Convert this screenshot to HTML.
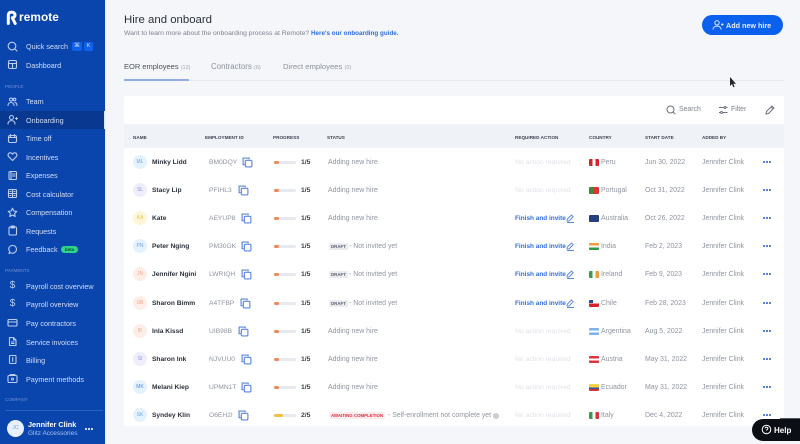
<!DOCTYPE html>
<html lang="en"><head><meta charset="utf-8"><title>Hire and onboard</title>
<style>
*{box-sizing:border-box}
html,body{margin:0;padding:0}
body{width:800px;height:444px;overflow:hidden;background:#f4f6fa;font-family:"Liberation Sans",sans-serif;position:relative;color:#8a8f9a}
#w{position:absolute;inset:0;filter:blur(.35px)}
.a{position:absolute;white-space:nowrap}
#side{position:absolute;left:0;top:0;width:105px;height:444px;background:#0a45ae}
.n{position:absolute;left:26px;font-size:7.2px;line-height:10px;color:#d3def5;white-space:nowrap;transform:translateY(.8px)}
.sec{position:absolute;left:5px;font-size:4.6px;line-height:6px;color:#6f94d6;white-space:nowrap}
.ic{position:absolute;left:7px;width:11px;height:11px;fill:none;stroke:#bccdf0;stroke-width:1.1;stroke-linecap:round;stroke-linejoin:round}
.th{position:absolute;top:135px;font-size:4.65px;line-height:6px;font-weight:700;color:#3c4250;white-space:nowrap}
.r{position:absolute;left:124px;width:660px;height:14px}
.r>*{position:absolute;white-space:nowrap;line-height:14px;font-size:6.95px;top:1px}
.av{left:9px;top:0;width:14px;height:14px;border-radius:50%;text-align:center;font-size:5px!important}
.nm{left:28px;color:#2b303b;font-weight:700;font-size:6.65px}
.id{left:85px;color:#8f94a0;font-size:6.7px}
.cp{top:1.5px;width:11px;height:11px;fill:none;stroke:#5a88dc;stroke-width:1.05}
.bar{left:150px;top:6px;width:22px;height:2.5px;border-radius:2px;background:#e6e9ef}
.bar i{position:absolute;left:0;top:-.3px;height:3px;border-radius:2px;background:#f0895a;width:5px}
.fr{left:177px;color:#3a3f4a;font-weight:700;font-size:6.8px}
.st{left:204px;color:#8f94a0}
.dr{left:205px;top:4px;height:7px;line-height:7px!important;background:#e9ebef;color:#5c6270;font-size:4.4px!important;font-weight:700;padding:0 2px;border-radius:1px}
.ni{left:391px;color:#dfe2e8;font-size:6.8px}
.fi{left:391px;color:#2f6fdc;font-weight:700;font-size:6.45px}
.pe{left:442px;top:2.5px;width:9px;height:9px;fill:none;stroke:#5a88dc;stroke-width:.9}
.fl{left:465px;top:4px;width:10px;height:6.5px;border-radius:1px;overflow:hidden}
.ct{left:477px;color:#8f94a0}
.dt{left:521px;color:#8f94a0}
.ab{left:578px;color:#8f94a0}
.dots{left:639px;top:6px;width:8px;height:2px;background:radial-gradient(circle at 1px 1px,#2f62c4 .9px,transparent 1.1px) 0 0/3px 2px repeat-x}
</style></head><body><div id="w">
<div id="side">
<svg class="a" style="left:6px;top:10px" width="11" height="15" viewBox="0 0 11 15"><path d="M2.300 13.500V5C2.300 3.200 3.500 2.300 5 2.300h1c2 0 3 1.200 3 2.700 0 1.600-1 2.700-2.700 2.800l2.900 5.700" fill="none" stroke="#fff" stroke-width="3" stroke-linecap="round" stroke-linejoin="round"/></svg>
<div class="a" style="left:19px;top:9px;font-size:11.800px;line-height:16px;color:#fff;font-weight:700;letter-spacing:.1px">remote</div>

<svg class="ic" style="top:41px" viewBox="0 0 11 11"><circle cx="5" cy="5" r="3.800"/><path d="M8 8l2 2"/></svg><div class="n" style="top:41px">Quick search</div>
<div class="a" style="left:72px;top:42px;width:10px;height:9px;border-radius:2px;background:#0f62ee;color:#d3def5;font-size:6px;line-height:9px;text-align:center">⌘</div>
<div class="a" style="left:84px;top:42px;width:9px;height:9px;border-radius:2px;background:#0f62ee;color:#d3def5;font-size:5.500px;line-height:9px;text-align:center">K</div>
<svg class="ic" style="top:59px" viewBox="0 0 11 11"><rect x="1.500" y="1.500" width="8" height="8" rx="1.500"/><path d="M1.500 4.500h8M5.500 4.500v5"/></svg><div class="n" style="top:60px">Dashboard</div>
<div class="sec" style="top:84px">PEOPLE</div>
<svg class="ic" style="top:96px" viewBox="0 0 11 11"><circle cx="4" cy="3.500" r="1.500"/><circle cx="7.500" cy="3.500" r="1.300"/><path d="M1 9.500c0-4 6-4 6 0M8 6.500c1.300.3 2 1.300 2 3"/></svg><div class="n" style="top:96px">Team</div>
<div class="a" style="left:0;top:111px;width:105px;height:18px;background:#08388f"></div><div class="a" style="left:103.500px;top:111px;width:1.500px;height:18px;background:#dfe8fa"></div>
<svg class="ic" style="top:114px" viewBox="0 0 11 11"><circle cx="4.500" cy="3.500" r="2"/><path d="M1 10c0-4.500 7-4.500 7 0M8.500 4.500h2M9.500 3.500v2"/></svg><div class="n" style="top:115px">Onboarding</div>
<svg class="ic" style="top:133px" viewBox="0 0 11 11"><rect x="1.500" y="2.500" width="8" height="7" rx="1.500"/><path d="M1.500 4.500h8M3.500 1.500v2M7.500 1.500v2"/></svg><div class="n" style="top:133px">Time off</div>
<svg class="ic" style="top:151px" viewBox="0 0 11 11"><path d="M5.500 9.500L1.800 5.800C.2 3.800 1.500 1.800 3.200 1.800c1 0 1.800.5 2.300 1.400.5-.9 1.300-1.400 2.300-1.400 1.700 0 3 2 1.400 4z"/></svg><div class="n" style="top:152px">Incentives</div>
<svg class="ic" style="top:170px" viewBox="0 0 11 11"><rect x="2" y="1.500" width="7.500" height="8" rx="1"/><path d="M4 1.500v8M5.500 4h2.500M5.500 6h2.500"/></svg><div class="n" style="top:170px">Expenses</div>
<svg class="ic" style="top:188px" viewBox="0 0 11 11"><rect x="1.500" y="1.500" width="8" height="8" rx="1"/><path d="M5.500 1.500v8M1.500 5.500h8M3 3.500h1M7 3.500h1M3 7.500h1M7 7.500h1"/></svg><div class="n" style="top:189px">Cost calculator</div>
<svg class="ic" style="top:207px" viewBox="0 0 11 11"><path d="M5.500 1.200l1.300 2.800 3 .4-2.200 2.100.6 3-2.700-1.500-2.700 1.500.6-3L1.200 4.400l3-.4z"/></svg><div class="n" style="top:207px">Compensation</div>
<svg class="ic" style="top:225px" viewBox="0 0 11 11"><rect x="2" y="2" width="7.500" height="8" rx="1"/><rect x="4" y="1" width="3.500" height="2" rx=".5"/></svg><div class="n" style="top:226px">Requests</div>
<svg class="ic" style="top:244px" viewBox="0 0 11 11"><path d="M2 9.500l.7-2C.5 4.500 2.500 1.500 5.700 1.500c4 0 5 5 2 7-1.500 1-3 .8-4 .2z"/></svg><div class="n" style="top:244px">Feedback</div>
<div class="a" style="left:61px;top:246px;width:17px;height:7px;border-radius:4px;background:#2fd688;color:#0a4a3a;font-size:4.500px;line-height:7px;text-align:center;font-weight:700">beta</div>
<div class="sec" style="top:268px">PAYMENTS</div>
<div class="a" style="left:8px;top:280px;width:9px;font-size:10px;line-height:12px;color:#bccdf0;text-align:center">$</div><div class="n" style="top:281px">Payroll cost overview</div>
<div class="a" style="left:8px;top:298px;width:9px;font-size:10px;line-height:12px;color:#bccdf0;text-align:center">$</div><div class="n" style="top:299px">Payroll overview</div>
<svg class="ic" style="top:317px" viewBox="0 0 11 11"><rect x="1" y="2.500" width="9" height="6.500" rx="1"/><path d="M1 5h9"/></svg><div class="n" style="top:318px">Pay contractors</div>
<svg class="ic" style="top:336px" viewBox="0 0 11 11"><path d="M2.500 1.500h4l2.500 2.500v5.500h-6.500zM6.500 1.500v2.500h2.500M4.500 6h2.500M4.500 7.500h2.500"/></svg><div class="n" style="top:337px">Service invoices</div>
<svg class="ic" style="top:354px" viewBox="0 0 11 11"><rect x="2.500" y="1.500" width="6.500" height="8" rx="1"/><path d="M5.700 3.500v4"/></svg><div class="n" style="top:355px">Billing</div>
<svg class="ic" style="top:373px" viewBox="0 0 11 11"><rect x="1" y="2.500" width="9" height="7" rx="1"/><path d="M2.500 2.500l1-1h4l1 1"/><circle cx="5.500" cy="6" r="1"/></svg><div class="n" style="top:374px">Payment methods</div>
<div class="sec" style="top:397px">COMPANY</div>
<div class="a" style="left:5px;top:410px;width:98px;height:1px;background:#2c60bd"></div>
<div class="a" style="left:7px;top:420px;width:17px;height:17px;border-radius:50%;background:#e8f1fd;color:#7ca3e4;font-size:5.500px;line-height:17px;text-align:center">JC</div>
<div class="a" style="left:28px;top:420px;font-size:7.300px;line-height:10px;color:#fff;font-weight:700">Jennifer Clink</div>
<div class="a" style="left:28px;top:429px;font-size:6.500px;line-height:9px;color:#a9c0ec">Glitz Accessories</div>
<div class="a" style="left:85px;top:428px;width:8px;height:2px;background:radial-gradient(circle at 1px 1px,#fff .9px,transparent 1.100px) 0 0/3px 2px repeat-x"></div>
</div>
<div class="a" style="left:105px;top:0;width:1px;height:444px;background:#e8edf7"></div>

<div class="a" style="left:124px;top:11.500px;font-size:11.400px;line-height:16px;color:#2a2f3b">Hire and onboard</div>
<div class="a" style="left:124px;top:28.500px;font-size:6.750px;line-height:10px;color:#7d828d">Want to learn more about the onboarding process at Remote? <span style="color:#2f6fdc;font-weight:700;font-size:6.300px">Here's our onboarding guide.</span></div>
<div class="a" style="left:702px;top:15px;width:81px;height:20px;border-radius:10px;background:#0b60ee"></div>
<svg class="a" style="left:712px;top:19px;fill:none;stroke:#d8e5fd;stroke-width:1" width="12" height="12" viewBox="0 0 12 12"><circle cx="5" cy="3.800" r="2.200"/><path d="M1 10.500c0-4.500 8-4.500 8 0M9 5.500h2.500M10.200 4.300v2.500"/></svg>
<div class="a" style="left:726px;top:19.500px;font-size:7.200px;line-height:12px;color:#e6eefe;font-weight:700">Add new hire</div>

<div class="a" style="left:124px;top:61px;font-size:7.500px;line-height:11px;color:#4b505c">EOR employees <span style="font-size:5.500px;color:#a1a5ae">(12)</span></div>
<div class="a" style="left:211px;top:61px;font-size:7.900px;line-height:11px;color:#8b909a">Contractors <span style="font-size:5.500px;color:#a1a5ae">(6)</span></div>
<div class="a" style="left:283px;top:61px;font-size:7.700px;line-height:11px;color:#8b909a">Direct employees <span style="font-size:5.500px;color:#a1a5ae">(0)</span></div>
<div class="a" style="left:124px;top:80px;width:660px;height:1px;background:#e8ebf1"></div>
<div class="a" style="left:124px;top:79px;width:65px;height:1.500px;background:#8fadde"></div>
<svg class="a" style="left:729px;top:77px" width="8" height="11" viewBox="0 0 8 11"><path d="M1 0v9l2-2 1.300 3.200 1.300-.6L4.300 6.700H7z" fill="#23262d"/></svg>

<div class="a" style="left:124px;top:96px;width:660px;height:330px;background:#fff;border-radius:2px"></div>
<div class="a" style="left:124px;top:124px;width:660px;height:24px;background:#eff2f6"></div>
<svg class="a" style="left:666px;top:104.500px;fill:none;stroke:#6c717c;stroke-width:1" width="10" height="10" viewBox="0 0 10 10"><circle cx="4.500" cy="4.500" r="3.500"/><path d="M7 7l2.300 2.300"/></svg>
<div class="a" style="left:679px;top:105px;font-size:6.900px;line-height:10px;color:#7d828d">Search</div>
<svg class="a" style="left:718px;top:104.500px;fill:none;stroke:#6c717c;stroke-width:.9" width="10" height="10" viewBox="0 0 10 10"><path d="M1 2.500h5M8 2.500h1.500M1 7.500h1.500M4.500 7.500h5"/><circle cx="7" cy="2.500" r="1"/><circle cx="3.500" cy="7.500" r="1"/></svg>
<div class="a" style="left:731px;top:105px;font-size:6.900px;line-height:10px;color:#7d828d">Filter</div>
<svg class="a" style="left:765px;top:104.500px;fill:none;stroke:#6c717c;stroke-width:1" width="10" height="10" viewBox="0 0 10 10"><path d="M1 9l.5-2.500L7 1l2 2-5.500 5.500zM6 2l2 2"/></svg>

<div class="th" style="left:133px">NAME</div><div class="th" style="left:205px">EMPLOYMENT ID</div><div class="th" style="left:273px">PROGRESS</div><div class="th" style="left:327px">STATUS</div><div class="th" style="left:515px">REQUIRED ACTION</div><div class="th" style="left:589px">COUNTRY</div><div class="th" style="left:645px">START DATE</div><div class="th" style="left:702px">ADDED BY</div>

<div class="r" style="top:155px"><div class="av" style="background:#e3f2fd;color:#6fa6e6">ML</div><div class="nm">Minky Lidd</div><div class="id">BM0DQY</div><svg class="cp" style="left:118px" viewBox="0 0 10 10"><path d="M6.500 2V1H1v6h1.500"/><rect x="3" y="3" width="6" height="6" rx="1"/></svg><div class="bar"><i></i></div><div class="fr">1/5</div><div class="st">Adding new hire</div><div class="ni">No action required</div><div class="fl" style="background:linear-gradient(90deg,#d8232a 33%,#fff 33% 66%,#d8232a 66%)"></div><div class="ct">Peru</div><div class="dt">Jun 30, 2022</div><div class="ab">Jennifer Clink</div><div class="dots"></div></div>

<div class="r" style="top:183px"><div class="av" style="background:#eeeefc;color:#8f8fe0">SL</div><div class="nm">Stacy Lip</div><div class="id">PFIHL3</div><svg class="cp" style="left:114px" viewBox="0 0 10 10"><path d="M6.500 2V1H1v6h1.500"/><rect x="3" y="3" width="6" height="6" rx="1"/></svg><div class="bar"><i></i></div><div class="fr">1/5</div><div class="st">Adding new hire</div><div class="ni">No action required</div><div class="fl" style="background:linear-gradient(90deg,#3c8a3a 40%,#e2342e 40%)"></div><div class="ct">Portugal</div><div class="dt">Oct 31, 2022</div><div class="ab">Jennifer Clink</div><div class="dots"></div></div>

<div class="r" style="top:211px"><div class="av" style="background:#fff6d8;color:#e6c050">KA</div><div class="nm">Kate</div><div class="id">AEYUP8</div><svg class="cp" style="left:117px" viewBox="0 0 10 10"><path d="M6.500 2V1H1v6h1.500"/><rect x="3" y="3" width="6" height="6" rx="1"/></svg><div class="bar"><i></i></div><div class="fr">1/5</div><div class="st">Adding new hire</div><div class="fi">Finish and invite</div><svg class="pe" viewBox="0 0 9 9"><path d="M1 7l.4-2L5.500 1l1.700 1.700L3 7zM1 8.500h7"/></svg><div class="fl" style="background:#25407f"></div><div class="ct">Australia</div><div class="dt">Oct 26, 2022</div><div class="ab">Jennifer Clink</div><div class="dots"></div></div>

<div class="r" style="top:239px"><div class="av" style="background:#e3f2fd;color:#6fa6e6">PN</div><div class="nm">Peter Nging</div><div class="id">PM30GK</div><svg class="cp" style="left:117px" viewBox="0 0 10 10"><path d="M6.500 2V1H1v6h1.500"/><rect x="3" y="3" width="6" height="6" rx="1"/></svg><div class="bar"><i></i></div><div class="fr">1/5</div><div class="dr">DRAFT</div><div class="st" style="left:225px">- Not invited yet</div><div class="fi">Finish and invite</div><svg class="pe" viewBox="0 0 9 9"><path d="M1 7l.4-2L5.500 1l1.700 1.700L3 7zM1 8.500h7"/></svg><div class="fl" style="background:linear-gradient(#f29a3c 33%,#fff 33% 66%,#2f9a45 66%)"></div><div class="ct">India</div><div class="dt">Feb 2, 2023</div><div class="ab">Jennifer Clink</div><div class="dots"></div></div>

<div class="r" style="top:267px"><div class="av" style="background:#fdeee8;color:#eda78c">JN</div><div class="nm">Jennifer Ngini</div><div class="id">LWRIQH</div><svg class="cp" style="left:117px" viewBox="0 0 10 10"><path d="M6.500 2V1H1v6h1.500"/><rect x="3" y="3" width="6" height="6" rx="1"/></svg><div class="bar"><i></i></div><div class="fr">1/5</div><div class="dr">DRAFT</div><div class="st" style="left:225px">- Not invited yet</div><div class="fi">Finish and invite</div><svg class="pe" viewBox="0 0 9 9"><path d="M1 7l.4-2L5.500 1l1.700 1.700L3 7zM1 8.500h7"/></svg><div class="fl" style="background:linear-gradient(90deg,#3c9a48 33%,#fff 33% 66%,#f09a40 66%)"></div><div class="ct">Ireland</div><div class="dt">Feb 9, 2023</div><div class="ab">Jennifer Clink</div><div class="dots"></div></div>

<div class="r" style="top:296px"><div class="av" style="background:#fdeee8;color:#eda78c">SB</div><div class="nm">Sharon Bimm</div><div class="id">A4TFBP</div><svg class="cp" style="left:116px" viewBox="0 0 10 10"><path d="M6.500 2V1H1v6h1.500"/><rect x="3" y="3" width="6" height="6" rx="1"/></svg><div class="bar"><i></i></div><div class="fr">1/5</div><div class="dr">DRAFT</div><div class="st" style="left:225px">- Not invited yet</div><div class="fi">Finish and invite</div><svg class="pe" viewBox="0 0 9 9"><path d="M1 7l.4-2L5.500 1l1.700 1.700L3 7zM1 8.500h7"/></svg><div class="fl" style="background:linear-gradient(#fff 50%,#d8232a 50%)"><div style="position:absolute;left:0;top:0;width:4px;height:3.200px;background:#2446a8"></div></div><div class="ct">Chile</div><div class="dt">Feb 28, 2023</div><div class="ab">Jennifer Clink</div><div class="dots"></div></div>

<div class="r" style="top:324px"><div class="av" style="background:#fdeee8;color:#eda78c">IK</div><div class="nm">Inla Kissd</div><div class="id">UIB98B</div><svg class="cp" style="left:114px" viewBox="0 0 10 10"><path d="M6.500 2V1H1v6h1.500"/><rect x="3" y="3" width="6" height="6" rx="1"/></svg><div class="bar"><i></i></div><div class="fr">1/5</div><div class="st">Adding new hire</div><div class="ni">No action required</div><div class="fl" style="background:linear-gradient(#7fb2ea 33%,#fff 33% 66%,#7fb2ea 66%)"></div><div class="ct">Argentina</div><div class="dt">Aug 5, 2022</div><div class="ab">Jennifer Clink</div><div class="dots"></div></div>

<div class="r" style="top:352px"><div class="av" style="background:#eeeefc;color:#8f8fe0">SI</div><div class="nm">Sharon Ink</div><div class="id">NJVUU0</div><svg class="cp" style="left:117px" viewBox="0 0 10 10"><path d="M6.500 2V1H1v6h1.500"/><rect x="3" y="3" width="6" height="6" rx="1"/></svg><div class="bar"><i></i></div><div class="fr">1/5</div><div class="st">Adding new hire</div><div class="ni">No action required</div><div class="fl" style="background:linear-gradient(#e0323a 33%,#fff 33% 66%,#e0323a 66%)"></div><div class="ct">Austria</div><div class="dt">May 31, 2022</div><div class="ab">Jennifer Clink</div><div class="dots"></div></div>

<div class="r" style="top:380px"><div class="av" style="background:#e3f2fd;color:#4f8de0">MK</div><div class="nm">Melani Kiep</div><div class="id">UPMN1T</div><svg class="cp" style="left:117px" viewBox="0 0 10 10"><path d="M6.500 2V1H1v6h1.500"/><rect x="3" y="3" width="6" height="6" rx="1"/></svg><div class="bar"><i></i></div><div class="fr">1/5</div><div class="st">Adding new hire</div><div class="ni">No action required</div><div class="fl" style="background:linear-gradient(#f5d547 50%,#2f55a8 50% 75%,#d8323a 75%)"></div><div class="ct">Ecuador</div><div class="dt">May 31, 2022</div><div class="ab">Jennifer Clink</div><div class="dots"></div></div>

<div class="r" style="top:408px"><div class="av" style="background:#e3f2fd;color:#6fa6e6">SK</div><div class="nm">Syndey Klin</div><div class="id">O6EH2I</div><svg class="cp" style="left:114px" viewBox="0 0 10 10"><path d="M6.500 2V1H1v6h1.500"/><rect x="3" y="3" width="6" height="6" rx="1"/></svg><div class="bar"><i style="width:9px;background:#f5bd42"></i></div><div class="fr">2/5</div><div class="dr" style="background:#fdecee;color:#d8323f">AWAITING COMPLETION</div><div class="st" style="left:264px;font-size:6.900px">- Self-enrollment not complete yet</div><div class="a" style="left:368.500px;top:4.500px;width:6px;height:6px;border-radius:50%;background:#c9ccd2"></div><div class="ni">No action required</div><div class="fl" style="background:linear-gradient(90deg,#3c9a48 33%,#fff 33% 66%,#d8323a 66%)"></div><div class="ct">Italy</div><div class="dt">Dec 4, 2022</div><div class="ab">Jennifer Clink</div><div class="dots"></div></div>

<div class="a" style="left:780px;top:418px;width:20px;height:10px;background:#55585e"></div>
<div class="a" style="left:752px;top:419px;width:50px;height:22px;border-radius:11px 0 0 11px;background:#0b0e14"></div>
<svg class="a" style="left:761px;top:424px;fill:none;stroke:#fff;stroke-width:1" width="11" height="11" viewBox="0 0 11 11"><circle cx="5.500" cy="5.500" r="4.300"/><path d="M4.200 4.300c.2-1.600 2.800-1.500 2.700.1 0 1-1.300 1-1.400 2M5.500 8v.2"/></svg>
<div class="a" style="left:774px;top:424.500px;font-size:8px;line-height:11px;color:#fff;font-weight:700">Help</div>
</div></body></html>
